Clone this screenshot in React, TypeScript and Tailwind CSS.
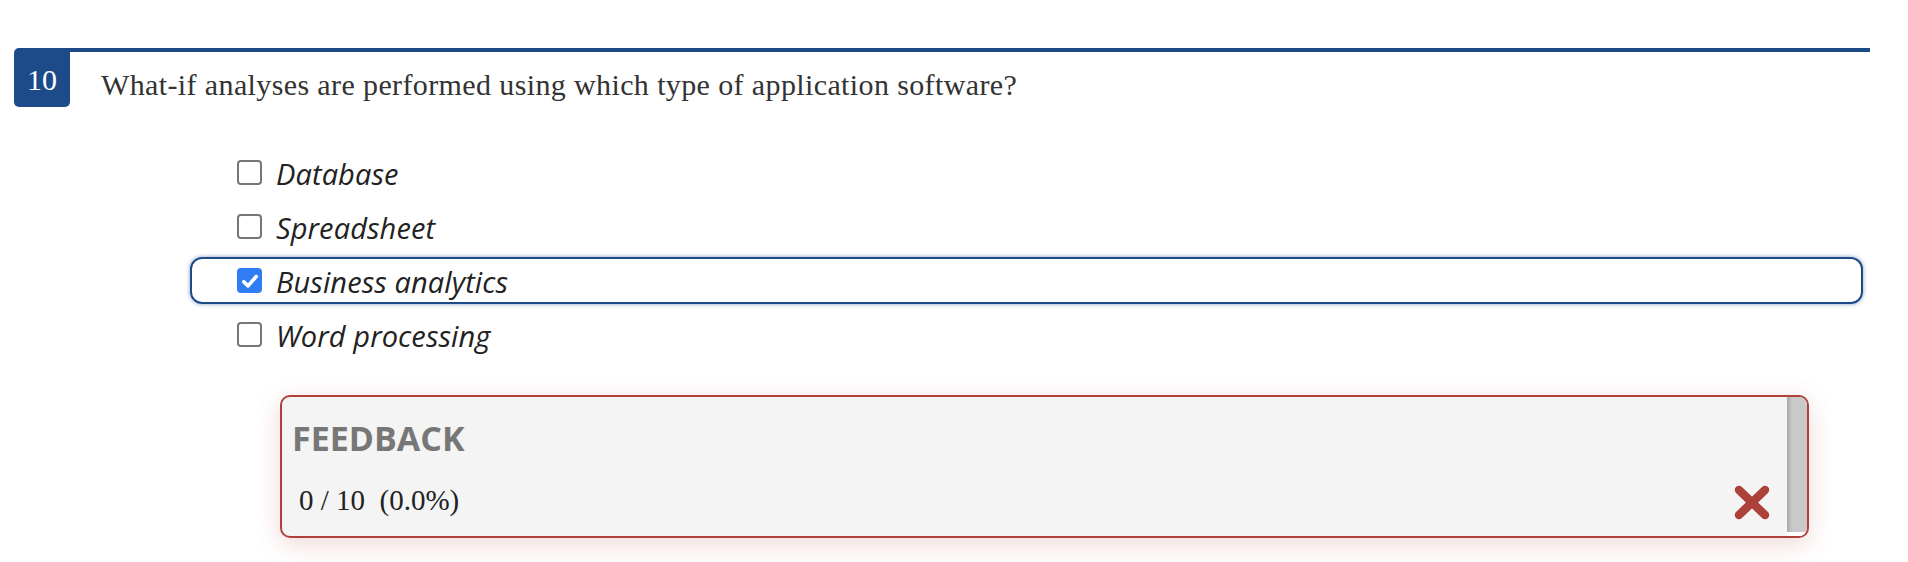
import React from "react";

const options = [
  { label: "Database", checked: false },
  { label: "Spreadsheet", checked: false },
  { label: "Business analytics", checked: true },
  { label: "Word processing", checked: false },
];

function Box({ checked }: { checked: boolean }) {
  if (checked) {
    return (
      <div className="w-[25px] h-[25px] rounded-[4px] bg-[#2f7cf5] flex items-center justify-center shrink-0">
        <svg width="20" height="20" viewBox="0 0 16 16" fill="none">
          <path d="M3 8.6 L6.4 11.9 L13 4.4" stroke="white" strokeWidth="2.9" strokeLinecap="round" strokeLinejoin="round" />
        </svg>
      </div>
    );
  }
  return <div className="w-[25px] h-[25px] rounded-[4px] border-2 border-[#767676] bg-white shrink-0" />;
}

export default function App() {
  return (
    <div className="w-[1908px] h-[562px] bg-white pt-[48px] overflow-hidden">
      <div className="ml-[14px] w-[1856px] flex items-start">
        <div className="w-[56px] h-[59px] bg-[#1d4b8a] rounded-[5px] rounded-tr-none flex justify-center pt-[14px] shrink-0">
          <span className="text-white text-[30px] leading-[36px]" style={{ fontFamily: '"Liberation Serif", serif' }}>10</span>
        </div>
        <div className="flex-1 border-t-4 border-[#1d4b8a]">
          <p className="pl-[31px] pt-[15px] text-[30px] leading-[36px] tracking-[0.38px] text-[#333333]" style={{ fontFamily: '"Liberation Serif", serif' }}>
            What-if analyses are performed using which type of application software?
          </p>
        </div>
      </div>

      <div className="ml-[190px] w-[1673px] mt-[42px] flex flex-col gap-[7px]">
        {options.map((o) => (
          <div
            key={o.label}
            className={
              "h-[47px] border-2 rounded-[12px] flex items-center pl-[45px] gap-[14px] " +
              (o.checked
                ? "border-[#1d4b8a] shadow-[0_0_4px_rgba(29,75,138,0.55)]"
                : "border-transparent")
            }
          >
            <Box checked={o.checked} />
            <span className="italic text-[29px] leading-[38px] tracking-[0.1px] text-[#222222] mt-[2px]" style={{ fontFamily: '"Open Sans", sans-serif' }}>
              {o.label}
            </span>
          </div>
        ))}
      </div>

      <div className="ml-[280px] mt-[37px] w-[1529px] h-[143px] border-2 border-[#b0413a] rounded-[10px] bg-[#f4f4f4] flex shadow-[0_6px_26px_rgba(180,60,50,0.2)] overflow-hidden">
        <div className="flex-1 flex flex-col">
          <div
            className="pl-[10px] pt-[20px] text-[34px] leading-[42px] font-bold text-[#777777]"
            style={{ fontFamily: '"Open Sans", sans-serif' }}
          >
            FEEDBACK
          </div>
          <div className="mt-[22px] pl-[17px] pr-[17px] flex items-center justify-between">
            <span className="text-[29px] leading-[35px] text-[#222222]" style={{ fontFamily: '"Liberation Serif", serif' }}>
              0 / 10&nbsp;&nbsp;(0.0%)
            </span>
            <svg width="36" height="35" viewBox="0 0 36 35" className="mt-[4px]">
              <path d="M5 5 L31 30 M31 5 L5 30" stroke="#ab4139" strokeWidth="8.5" strokeLinecap="round" />
            </svg>
          </div>
        </div>
        <div className="w-[20px] flex flex-col">
          <div className="flex-1 bg-[linear-gradient(90deg,#a6a6a6,#c9c9c9_25%,#c9c9c9)]" />
          <div className="h-[4px] bg-white" />
        </div>
      </div>
    </div>
  );
}
